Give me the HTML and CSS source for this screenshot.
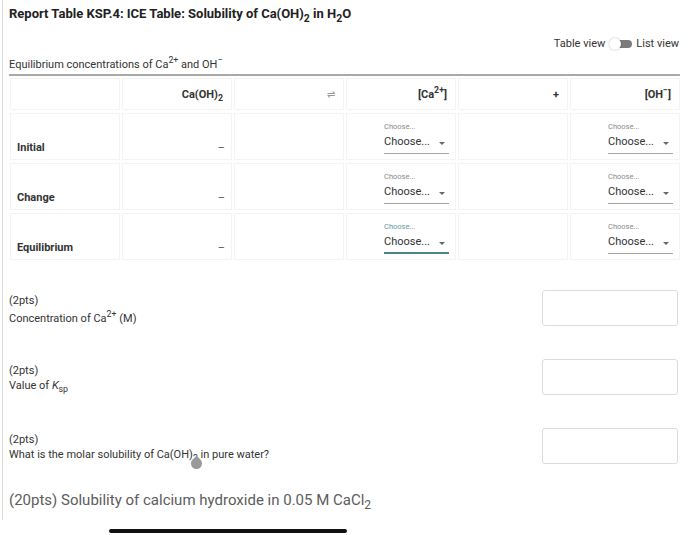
FILE: index.html
```html
<!DOCTYPE html>
<html>
<head>
<meta charset="utf-8">
<link rel="stylesheet" href="styles.css">
</head>
<body>
<div class="page">
  <h1 class="title">Report Table KSP.4: ICE Table: Solubility of Ca(OH)<sub>2</sub> in H<sub>2</sub>O</h1>
  <div class="view-toggle">
    <span>Table view</span>
    <span class="switch"><span class="track"></span><span class="thumb"></span></span>
    <span>List view</span>
  </div>
  <div class="caption">Equilibrium concentrations of Ca<sup>2+</sup> and OH<sup>−</sup></div>
  <div class="ice">
    <div class="cell head"></div>
    <div class="cell head"><span>Ca(OH)<sub>2</sub></span></div>
    <div class="cell head eq"><span>⇌</span></div>
    <div class="cell head"><span>[Ca<sup>2+</sup>]</span></div>
    <div class="cell head"><span>+</span></div>
    <div class="cell head"><span>[OH<sup>−</sup>]</span></div>

    <div class="cell label">Initial</div>
    <div class="cell dash">–</div>
    <div class="cell"></div>
    <div class="cell sel-cell"><div class="select"><div class="sel-label">Choose...</div><div class="sel-value"><span>Choose...</span><span class="arrow"></span></div></div></div>
    <div class="cell"></div>
    <div class="cell sel-cell"><div class="select"><div class="sel-label">Choose...</div><div class="sel-value"><span>Choose...</span><span class="arrow"></span></div></div></div>

    <div class="cell label">Change</div>
    <div class="cell dash">–</div>
    <div class="cell"></div>
    <div class="cell sel-cell"><div class="select"><div class="sel-label">Choose...</div><div class="sel-value"><span>Choose...</span><span class="arrow"></span></div></div></div>
    <div class="cell"></div>
    <div class="cell sel-cell"><div class="select"><div class="sel-label">Choose...</div><div class="sel-value"><span>Choose...</span><span class="arrow"></span></div></div></div>

    <div class="cell label">Equilibrium</div>
    <div class="cell dash">–</div>
    <div class="cell"></div>
    <div class="cell sel-cell"><div class="select focused"><div class="sel-label">Choose...</div><div class="sel-value"><span>Choose...</span><span class="arrow"></span></div></div></div>
    <div class="cell"></div>
    <div class="cell sel-cell"><div class="select"><div class="sel-label">Choose...</div><div class="sel-value"><span>Choose...</span><span class="arrow"></span></div></div></div>
  </div>

  <div class="questions">
    <div class="question">
      <div class="q-text">
        <div>(2pts)</div>
        <div class="q-line sup-line">Concentration of Ca<sup>2+</sup> (M)</div>
      </div>
      <div class="answer"></div>
    </div>
    <div class="question">
      <div class="q-text">
        <div>(2pts)</div>
        <div class="q-line">Value of <i>K</i><sub>sp</sub></div>
      </div>
      <div class="answer"></div>
    </div>
    <div class="question">
      <div class="q-text">
        <div>(2pts)</div>
        <div class="q-line">What is the molar solubility of Ca(OH)<sub class="handle-anchor">2<span class="handle"></span></sub> in pure water?</div>
      </div>
      <div class="answer"></div>
    </div>
  </div>

  <h2 class="section">(20pts) Solubility of calcium hydroxide in 0.05 M CaCl<sub>2</sub></h2>
</div>
<div class="home-bar"></div>
</body>
</html>
```

FILE: styles.css
```css
html, body {
  margin: 0;
  padding: 0;
  background: #fff;
}
body {
  font-family: Roboto, "Liberation Sans", sans-serif;
  color: #333;
  width: 700px;
  height: 535px;
  overflow: hidden;
}
sub, sup {
  line-height: 0;
  font-size: 80%;
}
.page {
  margin-left: 2px;
  border-left: 1px solid #dcdcdc;
  padding: 5px 20px 10px 6px;
  height: 505px;
}
.title {
  margin: 0;
  font-size: 13px;
  line-height: 18px;
  font-weight: 700;
  color: #222;
}
.view-toggle {
  margin-top: 14px;
  display: flex;
  justify-content: flex-end;
  align-items: center;
  font-size: 11px;
  line-height: 14px;
  color: #333;
  padding-right: 1px;
}
.switch {
  position: relative;
  width: 26px;
  height: 14px;
  margin: 0 2px 0 3px;
  display: inline-block;
}
.track {
  position: absolute;
  left: 8px;
  top: 3px;
  width: 16px;
  height: 8px;
  border-radius: 4px;
  background: #7b7b7b;
}
.thumb {
  position: absolute;
  left: 1px;
  top: 1px;
  width: 12px;
  height: 12px;
  border-radius: 50%;
  background: #fff;
  box-shadow: 0 0 2px rgba(0,0,0,0.3);
}
.caption {
  margin-top: 7px;
  font-size: 11px;
  line-height: 14px;
  padding-bottom: 2px;
  border-bottom: 2px solid #a9a9a9;
  color: #333;
}
.ice {
  margin: 2px 0 0 1px;
  display: grid;
  grid-template-columns: repeat(6, 1fr);
  grid-template-rows: 32px 47px 47px 47px;
  gap: 3px 2px;
}
.cell {
  border: 1px solid #f4f4f4;
  background: #fff;
  font-size: 11px;
  display: flex;
  justify-content: flex-end;
  align-items: center;
  padding: 0 8px;
}
.head {
  font-weight: 700;
  color: #333;
}
.head.eq {
  font-weight: 400;
  color: #999;
  font-size: 10px;
}
.label {
  justify-content: flex-start;
  align-items: flex-end;
  font-weight: 700;
  padding: 0 6px 5px;
}
.dash {
  align-items: flex-end;
  padding-bottom: 5px;
  color: #555;
  padding-right: 6px;
}
.sel-cell {
  align-items: flex-start;
  padding: 8px 6px 0 0;
}
.select {
  width: 65px;
  border-bottom: 1px solid #a5a5a5;
  padding-bottom: 4px;
}
.select.focused {
  border-bottom: 2px solid #4d848c;
  padding-bottom: 3px;
}
.sel-label {
  font-size: 7.5px;
  line-height: 10px;
  color: #8a8a8a;
}
.focused .sel-label {
  color: #5f9aa3;
}
.sel-value {
  margin-top: 3px;
  display: flex;
  align-items: center;
  justify-content: space-between;
  font-size: 11px;
  line-height: 14px;
  color: #333;
}
.arrow {
  width: 0;
  height: 0;
  border-left: 3px solid transparent;
  border-right: 3px solid transparent;
  border-top: 3px solid #666;
  margin: 2px 4px 0 0;
}
.questions {
  margin-top: 30px;
  display: flex;
  flex-direction: column;
  gap: 33px;
}
.question {
  display: flex;
  align-items: center;
  justify-content: space-between;
  height: 36px;
}
.q-text {
  font-size: 11px;
  line-height: 15px;
  color: #333;
  padding-top: 2px;
}
.q-line.sup-line {
  margin-top: 3px;
}
.answer {
  width: 134px;
  height: 34px;
  border: 1px solid #dcdcdc;
  border-radius: 3px;
  margin-right: 2px;
}
.handle-anchor {
  position: relative;
}
.handle {
  position: absolute;
  left: -2px;
  top: 5px;
  width: 11px;
  height: 11px;
  background: #9a9a9a;
  border-radius: 0 50% 50% 50%;
  transform: rotate(45deg);
}
.section {
  margin: 26px 0 0;
  font-size: 15px;
  line-height: 20px;
  font-weight: 400;
  color: #5c5c5c;
}
.home-bar {
  margin: 9px 0 0 109px;
  width: 238px;
  height: 4px;
  border-radius: 2px;
  background: #111;
}
```
